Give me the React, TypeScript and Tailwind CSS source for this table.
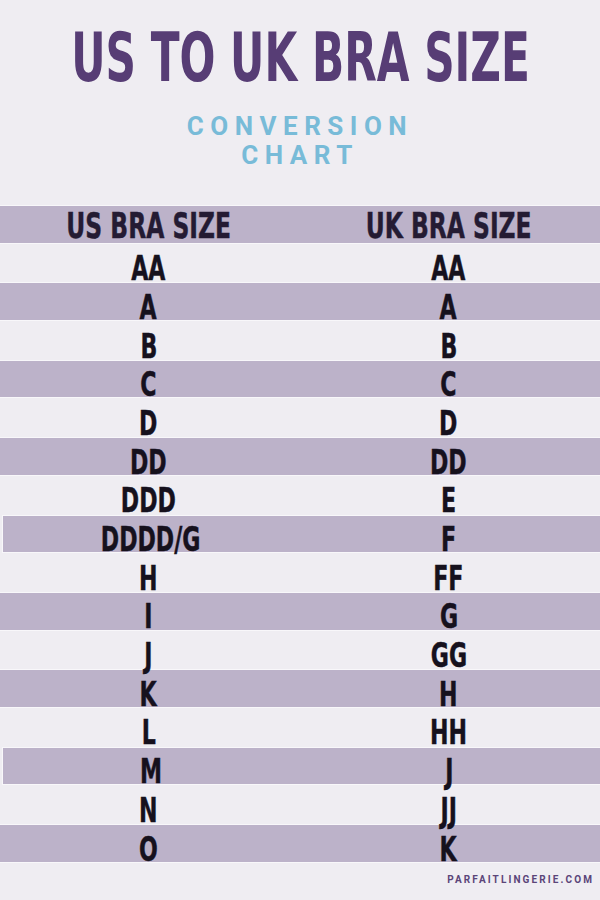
const rows: [string, string][] = [
  ["AA", "AA"],
  ["A", "A"],
  ["B", "B"],
  ["C", "C"],
  ["D", "D"],
  ["DD", "DD"],
  ["DDD", "E"],
  ["DDDD/G", "F"],
  ["H", "FF"],
  ["I", "G"],
  ["J", "GG"],
  ["K", "H"],
  ["L", "HH"],
  ["M", "J"],
  ["N", "JJ"],
  ["O", "K"],
];

function Cell({ text, header }: { text: string; header?: boolean }) {
  return (
    <div className="flex justify-center whitespace-nowrap">
      <span
        className={
          header
            ? "inline-block scale-x-[0.65] text-[36px] leading-[36px] font-bold text-[#241b33] [-webkit-text-stroke:0.5px_#241b33]"
            : "inline-block scale-x-[0.65] text-[34px] leading-[34px] font-bold text-[#16111d] [-webkit-text-stroke:0.5px_#16111d]"
        }
      >
        {text}
      </span>
    </div>
  );
}

export default function App() {
  return (
    <div className="w-[600px] h-[900px] bg-[#efedf2] flex flex-col overflow-hidden">
      <div className="pt-[25px] flex justify-center whitespace-nowrap font-['DejaVu_Sans',sans-serif]">
        <h1 className="inline-block scale-x-[0.631] text-[67px] leading-[67px] font-bold text-[#573d75]">
          US TO UK BRA SIZE
        </h1>
      </div>
      <div className="mt-[20px] flex flex-col items-center font-['Roboto',sans-serif] font-bold text-[26px] leading-[29px] tracking-[0.25em] text-[#78bbd8]">
        <div>CONVERSION</div>
        <div>CHART</div>
      </div>
      <div className="mt-[35px] flex flex-col font-['DejaVu_Sans',sans-serif]">
        <div className="h-[38.7px] grid grid-cols-[297px_1fr] bg-[#bcb2c9] border-y border-[#f8f7fa] pt-[2px]">
          <Cell text="US BRA SIZE" header />
          <Cell text="UK BRA SIZE" header />
        </div>
        {rows.map(([us, uk], i) => {
          const band = i % 2 === 1;
          const inset = us === "DDDD/G" || us === "M";
          return (
            <div
              key={i}
              className={
                band
                  ? inset
                    ? "h-[38.7px] grid grid-cols-[295px_1fr] ml-[2px] bg-[#bcb2c9] border border-r-0 border-[#f8f7fa] pt-[6.5px]"
                    : "h-[38.7px] grid grid-cols-[297px_1fr] bg-[#bcb2c9] border-y border-[#f8f7fa] pt-[6.5px]"
                  : "h-[38.7px] grid grid-cols-[297px_1fr] border-y border-transparent pt-[6.5px]"
              }
            >
              <Cell text={us} />
              <Cell text={uk} />
            </div>
          );
        })}
      </div>
      <div className="mt-[11px] pr-[6px] flex justify-end font-['Roboto',sans-serif] font-bold text-[10px] leading-[12px] tracking-[0.21em] text-[#5b4579]">
        PARFAITLINGERIE.COM
      </div>
    </div>
  );
}
